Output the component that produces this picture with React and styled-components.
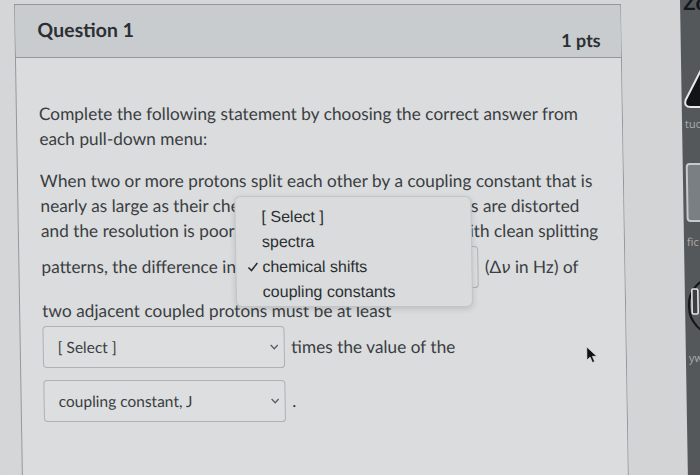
import React from 'react';
import styled, { createGlobalStyle } from 'styled-components';

const GlobalStyle = createGlobalStyle`
  html, body { margin: 0; padding: 0; }
  body {
    width: 700px; height: 475px; overflow: hidden;
    background: #d4d6d7;
    font-family: Lato, "Noto Sans", sans-serif;
    color: #3a3e42;
  }
`;

const Scene = styled.div`
  position: relative;
  width: 700px;
  height: 475px;
  display: flex;
  align-items: stretch;
  transform: skewX(0.95deg);
  transform-origin: 0 0;
`;

const Gutter = styled.div`
  width: 14px;
  flex: none;
  background: #d4d6d7;
`;

const Card = styled.section`
  width: 607px;
  flex: none;
  box-sizing: border-box;
  margin-top: 4px;
  border: 1px solid #94989b;
  border-bottom: none;
  background: #dadcdd;
  display: flex;
  flex-direction: column;
`;

const Header = styled.header`
  height: 53px;
  flex: none;
  box-sizing: border-box;
  display: flex;
  justify-content: space-between;
  align-items: flex-start;
  padding: 13px 20px 0 22px;
  background: #c9ccce;
  border-bottom: 1px solid #94989b;
`;

const Title = styled.h2`
  margin: 0;
  font-size: 19.5px;
  line-height: 24px;
  font-weight: 700;
  color: #2c3034;
`;

const Points = styled.div`
  margin-top: 10px;
  font-size: 18px;
  line-height: 24px;
  font-weight: 700;
  color: #2c3034;
`;

const Body = styled.div`
  position: relative;
  padding: 0 22px;
  font-size: 17.3px;
  line-height: 25px;
`;

const Para = styled.p`
  margin: ${(p) => p.$top}px 0 0 0;
  white-space: nowrap;
`;

const SelectWrap = styled.span`
  position: relative;
  display: inline-block;
  margin: 3px 2px 9.5px ${(p) => p.$ml || 0}px;
  vertical-align: baseline;
`;

const SelectBox = styled.span`
  display: inline-flex;
  align-items: center;
  justify-content: space-between;
  box-sizing: border-box;
  width: ${(p) => p.$w}px;
  height: 42px;
  padding: 0 5px 0 14px;
  border: 1px solid #aeb2b5;
  border-radius: 4px;
  background: #dcdedf;
  font-size: 15.5px;
  color: #3a3e42;
`;

const SelectLabel = styled.span`
  line-height: 20px;
`;

const Chevron = () => (
  <svg width="9" height="6" viewBox="0 0 9 6">
    <polyline points="1,1 4.5,4.8 8,1" fill="none" stroke="#5a5e62" strokeWidth="1.3" />
  </svg>
);

const Menu = styled.div`
  position: absolute;
  left: -12px;
  top: -50px;
  width: 237px;
  height: 111px;
  box-sizing: border-box;
  padding: 7px 0 0 0;
  border-radius: 6px;
  background: #d9dbdc;
  border: 1px solid #c2c5c7;
  box-shadow: 0 2px 6px rgba(0, 0, 0, 0.14);
  font-family: "Liberation Sans", Arial, sans-serif;
  font-size: 16px;
  color: #2b2f32;
  z-index: 2;
`;

const MenuItem = styled.div`
  display: flex;
  align-items: center;
  height: 25px;
  line-height: 25px;
`;

const CheckCol = styled.span`
  width: 26px;
  flex: none;
  display: flex;
  justify-content: flex-end;
  padding-right: 4px;
  box-sizing: border-box;
`;

const Check = () => (
  <svg width="11" height="10" viewBox="0 0 11 10">
    <polyline points="1,5.5 4,8.5 10,1" fill="none" stroke="#2b2f32" strokeWidth="1.6" />
  </svg>
);

const Nu = styled.span`
  font-family: "DejaVu Sans", sans-serif;
  font-style: italic;
  font-size: 16.5px;
`;

const Margin = styled.div`
  width: 59px;
  flex: none;
  background: #d2d4d5;
`;

const Strip = styled.div`
  position: relative;
  flex: 1;
  background: #55585b;
  overflow: hidden;
`;

const StripText = styled.span`
  position: absolute;
  left: 3px;
  top: ${(p) => p.$y}px;
  font-family: "Open Sans", sans-serif;
  font-size: 11px;
  color: #a9acae;
`;

const StripLogo = styled.span`
  position: absolute;
  left: 3px;
  top: -8px;
  font-family: "Liberation Sans", sans-serif;
  font-weight: 700;
  font-size: 20px;
  color: #15171a;
`;

const StripArt = styled.svg`
  position: absolute;
  left: 0;
  top: 0;
`;

const Cursor = styled.svg`
  position: absolute;
  left: 580px;
  top: 346px;
  z-index: 3;
`;

const options = ['[ Select ]', 'spectra', 'chemical shifts', 'coupling constants'];

export default function App() {
  return (
    <>
      <GlobalStyle />
      <Scene>
        <Gutter />
        <Card>
          <Header>
            <Title>Question 1</Title>
            <Points>1 pts</Points>
          </Header>
          <Body>
            <Para $top={43}>
              Complete the following statement by choosing the correct answer from
              <br />
              each pull-down menu:
            </Para>
            <Para $top={17}>
              When two or more protons split each other by a coupling constant that is
              <br />
              nearly as large as their chemical shift difference, the peaks are distorted
              <br />
              and the resolution is poor, and one does not see peaks with clean splitting
              <br />
              patterns, the difference in{' '}
              <SelectWrap $ml={7}>
                <SelectBox $w={231}>
                  <SelectLabel>chemical shifts</SelectLabel>
                  <Chevron />
                </SelectBox>
                <Menu>
                  {options.map((o) => (
                    <MenuItem key={o}>
                      <CheckCol>{o === 'chemical shifts' ? <Check /> : null}</CheckCol>
                      <span>{o}</span>
                    </MenuItem>
                  ))}
                </Menu>
              </SelectWrap>{' '}
              (Δ<Nu>ν</Nu> in Hz) of
              <br />
              two adjacent coupled protons must be at least
              <br />
              <SelectWrap>
                <SelectBox $w={242}>
                  <SelectLabel>[ Select ]</SelectLabel>
                  <Chevron />
                </SelectBox>
              </SelectWrap>{' '}
              times the value of the
              <br />
              <SelectWrap>
                <SelectBox $w={242}>
                  <SelectLabel>coupling constant, J</SelectLabel>
                  <Chevron />
                </SelectBox>
              </SelectWrap>{' '}
              .
            </Para>
          </Body>
        </Card>
        <Margin />
        <Strip>
          <StripLogo>Zo</StripLogo>
          <StripArt width="50" height="475" viewBox="0 0 50 475">
            <path d="M22 66 L4 100 Q2 107 9 107 L30 107 L30 66 Z" fill="#111316" stroke="#e6e8e9" strokeWidth="2" />
            <rect x="4" y="164" width="40" height="57" rx="3" fill="#7a7f83" stroke="#c7cacc" strokeWidth="2" />
            <path d="M4 307 A28 28 0 0 1 30 277" fill="none" stroke="#141618" strokeWidth="2.2" />
            <path d="M4 307 A28 28 0 0 0 30 335" fill="none" stroke="#141618" strokeWidth="2.2" />
            <rect x="7" y="289" width="6" height="25" rx="1.5" fill="#3d4043" stroke="#e3e5e6" strokeWidth="1.6" />
          </StripArt>
          <StripText $y={116}>tuc</StripText>
          <StripText $y={234}>fic</StripText>
          <StripText $y={350}>yw</StripText>
        </Strip>
        <Cursor width="12" height="18" viewBox="0 0 12 18">
          <path d="M1 1 L1 14 L4.2 11 L6.5 16.5 L8.6 15.6 L6.4 10.3 L10.8 10.3 Z" fill="#111" stroke="#e8e8e8" strokeWidth="0.6" />
        </Cursor>
      </Scene>
    </>
  );
}
